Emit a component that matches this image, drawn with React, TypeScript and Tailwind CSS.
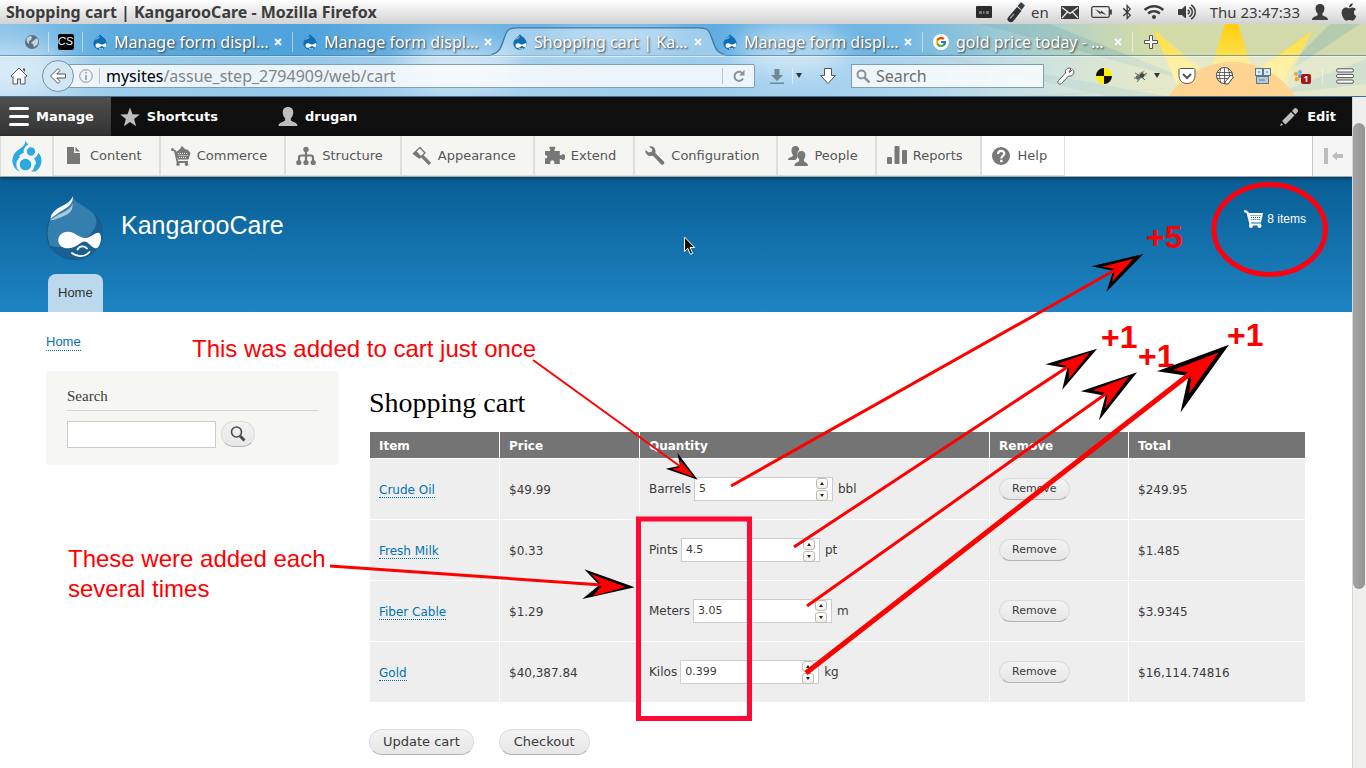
import React from 'react';
import { FaApple, FaBluetoothB, FaWifi, FaVolumeUp, FaGetPocket } from 'react-icons/fa';
import { FcGoogle } from 'react-icons/fc';

interface CartRow {
  id: string;
  item: string;
  price: string;
  label: string;
  qty: string;
  unit: string;
  total: string;
}

const rows: CartRow[] = [
  { id: 'oil', item: 'Crude Oil', price: '$49.99', label: 'Barrels', qty: '5', unit: 'bbl', total: '$249.95' },
  { id: 'milk', item: 'Fresh Milk', price: '$0.33', label: 'Pints', qty: '4.5', unit: 'pt', total: '$1.485' },
  { id: 'cable', item: 'Fiber Cable', price: '$1.29', label: 'Meters', qty: '3.05', unit: 'm', total: '$3.9345' },
  { id: 'gold', item: 'Gold', price: '$40,387.84', label: 'Kilos', qty: '0.399', unit: 'kg', total: '$16,114.74816' },
];

/* ---------- icons ---------- */

const Person = ({ className }: { className?: string }) => (
  <svg viewBox="0 0 18 18" className={className} fill="currentColor">
    <path d="M9 0c3.2 0 5 2 5 5 0 2.400-.9 4.500-2.300 5.700v1.800c.2 1.500 6.300 1.500 6.300 5.500H0c0-4 6.100-4 6.300-5.500v-1.800C4.900 9.500 4 7.400 4 5c0-3 1.800-5 5-5z" />
  </svg>
);

const Druplicon = ({ className }: { className?: string }) => (
  <svg viewBox="0 0 57 65" className={className}>
    <path d="M26.700 1C28 5 31 8 36 10.500 48 17 56.500 25 56.500 37.500 56.500 53 44 64.500 28.500 64.500S.5 53 .5 38C.5 30 3 24 7 18c5-5 18-6 19.700-17z" fill="#17608f" stroke="#1a5c8b" />
    <path d="M27 3c4 7 23 11 23.500 23C50 42 26 56 4.500 51-1 39 2 26 9 17 16 13 26 10 27 3z" fill="#357fae" />
    <path d="M4 25c3-1 5-4 10-6 7-3 11-6 13-11l-1 6c-2 5-8 7-13 9-4 1-6 3-9 2z" fill="#a9c9df" />
    <path d="M26.700 1C27.500 7 24 11 17 15c-5 3-8 5-12.300 9C4 19 10 14 16 11c6-3 9-5 10.700-10z" fill="#fff" />
    <path d="M12.300 45c0-5 4.700-8.300 9.700-8.300 7 0 11 6.300 17 6.300 5 0 10-6 14-5.300 3 2 2.500 9 0 13-1 2-2 2.600-3 2.600-4 0-7.500-6.800-11.500-6.800S30 53.300 22 53.300c-6 0-9.700-3.300-9.700-8.300z" fill="#fff" />
    <path d="M31.500 54.500c2-4 7-4 9.500-1M26 58c5 4.500 13 4 17.500-1" fill="none" stroke="#fff" strokeWidth="1.800" strokeLinecap="round" />
  </svg>
);

const Favicon = () => (
  <svg viewBox="0 0 14 16" className="h-4 w-3.5 shrink-0">
    <path d="M7 0c1 2.500 6.600 4 6.600 9.200C13.600 13 10.600 15.800 7 15.800S.4 13 .4 9.200C.4 5 5.500 3.500 7 0z" fill="#0f6fb4" />
    <path d="M2.500 11.400c0-1.400 1.200-2.200 2.400-2.200 1.800 0 2.600 1.400 4.100 1.400s2.700-1.800 4-1.400c.6 1.500.1 3.600-1 4-1.200.3-1.900-1.300-3-1.300-1.300 0-2 1.900-4 1.900-1.500 0-2.500-1-2.500-2.400z" fill="#fff" />
    <path d="M6 14.500c1.300.7 3 .7 4-.1" stroke="#fff" fill="none" strokeWidth=".8" />
    <path d="M2 6c1-2 4-2.500 4.800-4C7 4.500 4 5 2 6z" fill="#8fc7ea" />
  </svg>
);

const DrupalEight = () => (
  <svg viewBox="0 0 30 32" className="h-8 w-[30px]">
    <path d="M13 0c1 3 3.500 4.500 7 7.500 5.500 4 9.500 7 9.500 13 0 5-2.500 8.700-6 11H7C3 29 .5 25.500.5 20.500.5 14 4.500 11 9 8c2.500-2 5-4 4-8z" fill="#2ba9e0" />
    <circle cx="13.500" cy="24.500" r="7.500" fill="#2ba9e0" stroke="#f5f5f2" strokeWidth="3.500" />
    <circle cx="19" cy="11.500" r="5.800" fill="#2ba9e0" stroke="#f5f5f2" strokeWidth="3.300" />
    <path d="M8 17c2-2 4-3 5.500-3M20 18.500c2 1.500 2.500 3 2.500 6" stroke="#f5f5f2" strokeWidth="3" fill="none" />
    <circle cx="13.500" cy="25" r="5.200" fill="#2ba9e0" />
  </svg>
);

const Cart = ({ className, dots }: { className?: string; dots: string }) => (
  <svg viewBox="0 0 19 18" className={className}>
    <path d="M1 1.200l2.500 1.300L6 12.500l.5 2H17" fill="none" stroke="currentColor" strokeWidth="2" />
    <path d="M4 3h15l-2 9.500H6z" fill="currentColor" />
    <path d="M6.500 5.500h10.500M7 7.500h10M7.300 9.500h9" stroke={dots} strokeWidth="1" strokeDasharray="1 1" />
    <circle cx="1.300" cy="1.300" r="1.300" fill="currentColor" />
    <circle cx="7" cy="16" r="2" fill="currentColor" />
    <circle cx="15.500" cy="16" r="2" fill="currentColor" />
  </svg>
);

const trayIcons: Record<string, React.ReactNode> = {
  Content: (
    <path d="M3 1h7v6h6v11H3zM11.500 1L16 5.500h-4.500z" />
  ),
  Commerce: (
    <>
      <path d="M4.500 6L8 4l3-4 3 3 3 1 2.500 3-2 6.500H7z" />
      <path d="M1 3.500l3 1.500 2.500 11H17" fill="none" stroke="currentColor" strokeWidth="1.800" />
      <path d="M7 7.500h10M7.500 9.500h9M8 11.500h8" stroke="#f5f5f2" strokeWidth="1" strokeDasharray="1 1" />
      <circle cx="1.500" cy="3.500" r="1.500" />
      <circle cx="7" cy="18.300" r="1.700" />
      <circle cx="15.500" cy="18.300" r="1.700" />
    </>
  ),
  Structure: (
    <>
      <path d="M10 4v11M3 15v-3.500c0-1.500 1-2 2-2h10c1.200 0 2 .6 2 2V15" fill="none" stroke="currentColor" strokeWidth="2.200" />
      <circle cx="10" cy="3.500" r="2.700" />
      <circle cx="2.800" cy="16.500" r="2.600" />
      <circle cx="10" cy="16.500" r="2.600" />
      <circle cx="17.200" cy="16.500" r="2.600" />
    </>
  ),
  Appearance: (
    <>
      <path d="M1.500 7.500L8 1.500l5 5.500-5.500 5z" fill="none" stroke="currentColor" strokeWidth="1.300" />
      <path d="M.8 8l3.500-3 5.200 5.500-2.500 2z" />
      <path d="M10 10l8 8" stroke="currentColor" strokeWidth="3.200" />
    </>
  ),
  Extend: (
    <path d="M0 5h5.200V3.500C4 3 4 1 5 .8h4.500c1.200.2 1.200 2.200 0 2.700V5h5.300v4.300h1.400c.6-1.600 3.300-1.500 3.800.2v3.200c-.5 1.600-3.200 1.800-3.800.2h-1.400V18H9.300v-1.500c0-3-4-3-4 0V18H0v-5.500c3 0 3-3.500 0-3.500z" />
  ),
  Configuration: (
    <path d="M4 .8C6-.3 8.500.5 9.700 2.500c1 1.600 1 3 .6 4.600l8.500 8.300c1.600 1.800-.9 4.400-2.800 2.800L8 9.800C5 10.700 2 9.500.8 7 .4 6 .2 5 .3 4l3.500 2.600L7 5.500 7.200 3z" />
  ),
  People: (
    <>
      <path d="M7.500 0c2.600 0 3.800 1.700 3.800 4-1.800 1.300-2.300 4-1.500 6.500C9 12.500 8 13.800 7 14H0c0-3 4.600-3 4.800-4V8.500C3.900 7.600 3.500 6 3.500 4.200 3.500 1.700 4.900 0 7.500 0z" />
      <path d="M13.500 5c2.700 0 3.900 1.800 3.900 4.100 0 1.700-.6 3.400-1.500 4.200v1.600c.2 1.200 4.100 1.100 4.100 5.100H6.500c0-4 4.400-3.900 4.600-5.100v-1.600c-1-.8-1.500-2.500-1.500-4.200C9.600 6.800 10.800 5 13.500 5z" />
    </>
  ),
  Reports: (
    <>
      <rect x="0" y="11" width="5" height="7" rx="1" />
      <rect x="7.500" y="0" width="5" height="18" rx="1" />
      <rect x="15" y="4" width="5" height="14" rx="1" />
    </>
  ),
  Help: (
    <>
      <circle cx="9" cy="10" r="9" />
      <path d="M6 8c0-4 6.300-4 6.300-.5 0 2.200-3 2.300-3 5" fill="none" stroke="#fff" strokeWidth="2.200" />
      <rect x="8" y="13.800" width="2.600" height="2.400" fill="#fff" />
    </>
  ),
};

const Caret = () => (
  <svg viewBox="0 0 6 5" className="h-[5px] w-1.5">
    <path d="M0 0h6L3 5z" fill="#333" />
  </svg>
);

/* ---------- desktop panel ---------- */

const SystemBar = () => (
  <div className="flex h-6 shrink-0 items-center justify-between bg-linear-to-b from-white to-[#d2d2d2] pr-2 pl-1.5 font-['Noto_Sans',sans-serif] text-[#3c3c3c]">
    <span className="text-base font-bold">Shopping cart | KangarooCare - Mozilla Firefox</span>
    <div className="flex items-center text-[15px]">
      <svg viewBox="0 0 16 12" className="mr-3.5 h-3 w-4">
        <rect width="16" height="12" rx="1" fill="#2b2b2b" />
        <path d="M3 5h3v3H3zM7 5h1.500v3H7zM10 5h3v3h-3z" fill="#777" />
      </svg>
      <svg viewBox="0 0 19 21" className="mr-1.5 h-[21px] w-[19px]">
        <path d="M2 15.500L11 5l4.500 3.800L7 19.500c-3 2-7-1-5-4z" fill="#2e3136" />
        <path d="M11.500 4L15 0l4 3.500L15.500 8z" fill="#3c4147" />
        <path d="M4 16.500l4-4.500" stroke="#999" strokeWidth="1.500" />
      </svg>
      <span className="mr-3">en</span>
      <svg viewBox="0 0 18 13" className="mr-3 h-[13px] w-[18px]">
        <rect width="18" height="13" fill="currentColor" />
        <path d="M1 1.500l8 6 8-6M1 12l5.500-6M17 12l-5.500-6" fill="none" stroke="#f0f0f0" strokeWidth="1.200" />
      </svg>
      <svg viewBox="0 0 21 12" className="mr-2.5 h-3 w-[21px]">
        <rect x=".7" y=".7" width="17.600" height="10.600" rx="1.500" fill="none" stroke="currentColor" strokeWidth="1.300" />
        <rect x="19" y="3.500" width="1.800" height="5" fill="currentColor" />
        <path d="M4 3l6 3V4.500L15.500 9 9.500 7v1.500z" fill="currentColor" />
      </svg>
      <FaBluetoothB className="mr-3 h-4 w-2.5" />
      <FaWifi className="mr-3 h-4 w-5" />
      <FaVolumeUp className="mr-3 h-4 w-[22px]" />
      <span className="mr-3">Thu 23:47:33</span>
      <Person className="mr-3 h-4 w-4" />
      <FaApple className="h-5 w-[18px]" />
    </div>
  </div>
);

/* ---------- browser chrome ---------- */

const ThemeArt = () => (
  <svg viewBox="0 0 1366 73" preserveAspectRatio="xMaxYMin slice" className="absolute inset-0 h-full w-full">
    <defs>
      <linearGradient id="sky" x1="0" x2="1">
        <stop offset="0" stopColor="#8fc5e9" />
        <stop offset=".08" stopColor="#5facdf" />
        <stop offset=".22" stopColor="#4ea2dc" />
        <stop offset=".32" stopColor="#72b5e3" />
        <stop offset=".5" stopColor="#5dabe1" />
        <stop offset=".66" stopColor="#74b8e4" />
        <stop offset=".75" stopColor="#a6cdd0" />
        <stop offset=".84" stopColor="#d3dba8" />
        <stop offset="1" stopColor="#d2d9ac" />
      </linearGradient>
      <linearGradient id="ray" x1="0" y1="0" x2="0" y2="1">
        <stop offset="0" stopColor="#ffce0a" />
        <stop offset="1" stopColor="#fff08c" />
      </linearGradient>
      <filter id="soft" x="-50%" y="-50%" width="200%" height="200%">
        <feGaussianBlur stdDeviation="12" />
      </filter>
    </defs>
    <rect width="1366" height="73" fill="url(#sky)" />
    <g fill="#fff" opacity=".45" filter="url(#soft)">
      <ellipse cx="20" cy="45" rx="50" ry="25" />
      <ellipse cx="460" cy="40" rx="55" ry="24" />
      <ellipse cx="620" cy="12" rx="70" ry="10" />
      <ellipse cx="790" cy="25" rx="55" ry="26" />
    </g>
    <path d="M980 0h70l150 60zM1000 73l190-10-150 10zM1330 0h30l-90 60zM1366 35v25l-90 10zM880 20l290 53h-60z" fill="#7fb3b5" opacity=".35" />
    <path d="M1153 5l43 40-18 18zM1225 0h13l14 45h-41zM1312 7l-50 35 20 16z" fill="url(#ray)" />
    <path d="M1153 5l25 58 8 10 20-25zM1312 7l-30 62-20-25z" fill="#ffe76a" opacity=".6" />
    <circle cx="1232" cy="114" r="76" fill="#ffb84a" />
  </svg>
);

const tabText = 'text-base text-white [text-shadow:1px_1px_2px_#333]';

const Tab = ({ title, icon, active, divider }: { title: string; icon: React.ReactNode; active?: boolean; divider?: boolean }) => (
  <div className="relative flex h-8 w-[210px] min-w-0 items-center pt-1 pr-[9px] pl-2.5">
    {active && (
      <svg viewBox="0 0 234 34" className="absolute top-0.5 -left-3 h-[31px] w-[234px]" preserveAspectRatio="none">
        <path d="M0 30.500C8 30 10 24 13 14 16 4 18 2 26 2h182c8 0 10 2 13 12 3 10 5 16 13 16.500V34H0z" fill="#fff" fillOpacity=".38" />
        <path d="M0 31C8 30 10 24 13 14 16 4 18 2 26 2h182c8 0 10 2 13 12 3 10 5 16 13 17" fill="none" stroke="#41779f" strokeWidth="1.300" />
      </svg>
    )}
    <button className="relative flex min-w-0 flex-1 items-center gap-[7px] text-left">
      {icon}
      <span className={`whitespace-nowrap ${tabText}`}>{title}</span>
    </button>
    <button aria-label="Close tab" className="relative flex size-3 items-center justify-center">
      <svg viewBox="0 0 8 8" className="size-2">
        <path d="M1 1l6 6M7 1L1 7" stroke="#f4f8fb" strokeWidth="2" />
      </svg>
    </button>
    {divider && <span className="absolute top-2 right-0 h-5 w-px bg-white/50" />}
  </div>
);

const TabStrip = () => (
  <div className="relative flex h-8 items-stretch border-b border-[#4c7fa3]/70">
    <button aria-label="Pinned tab" className="flex w-12 items-center justify-end pt-1 pr-2">
      <svg viewBox="0 0 16 16" className="size-4">
        <circle cx="8" cy="8" r="7" fill="#5b7283" />
        <path d="M3 4c2-2 4-2 5-1l-1 3-2 1v3C3 9 2 7 3 4zM9 7l4-3c1.500 2 1.500 5 0 7l-3 2-1-3-2-1z" fill="#c3d3df" />
      </svg>
    </button>
    <span className="mt-2 h-5 w-px bg-white/50" />
    <button aria-label="Pinned tab" className="flex w-[33px] items-center justify-center pt-1">
      <span className="flex size-4 items-center justify-center rounded-xs bg-black font-['Liberation_Sans',sans-serif] text-[11px] text-white italic">CS</span>
    </button>
    <span className="mt-2 h-5 w-px bg-white/50" />
    <Tab title="Manage form displ…" icon={<Favicon />} divider />
    <Tab title="Manage form displ…" icon={<Favicon />} />
    <Tab title="Shopping cart | Ka…" icon={<Favicon />} active />
    <Tab title="Manage form displ…" icon={<Favicon />} divider />
    <Tab
      title="gold price today - …"
      icon={
        <span className="flex size-4 shrink-0 items-center justify-center rounded-full bg-white">
          <FcGoogle className="size-3" />
        </span>
      }
      divider
    />
    <button aria-label="New tab" className="flex w-9 items-center justify-center pt-1">
      <svg viewBox="0 0 14 14" className="size-3.5">
        <path d="M5.500.5h3v5h5v3h-5v5h-3v-5h-5v-3h5z" fill="#fff" stroke="#555" />
      </svg>
    </button>
  </div>
);

const NavBar = () => (
  <div className="relative flex h-10 items-center border-t border-white/40 bg-white/40 pb-0.5">
    <button aria-label="Home page" className="flex w-[38px] justify-center">
      <svg viewBox="0 0 18 18" className="size-[18px]">
        <path d="M9 1l8 8-1.300 1.300L15 9.600V17h-4.500v-5h-3v5H3V9.600l-.7.700L1 9z" fill="#fff" stroke="#555" strokeLinejoin="round" />
        <path d="M13 1.500h2V5l-2-2z" fill="#555" />
      </svg>
    </button>
    <button aria-label="Back" className="z-10 ml-1 flex size-8 items-center justify-center rounded-full border border-[#6d94b0] bg-[#d3e6f4]">
      <svg viewBox="0 0 18 18" className="size-[18px]">
        <path d="M9 1.500l2 2L7.800 7H16.500v4H7.800L11 14.500l-2 2L1.500 9z" fill="#fff" stroke="#555" strokeLinejoin="round" />
      </svg>
    </button>
    <div className="-ml-2 flex h-6 min-w-0 flex-1 items-center rounded-r-xs border border-[#7e9fb5] bg-white/80 pl-3">
      <svg viewBox="0 0 14 14" className="size-3.5 shrink-0" fill="none" stroke="#8d949a">
        <circle cx="7" cy="7" r="6.300" />
        <path d="M7 6v5M7 3v1.500" strokeWidth="1.500" />
      </svg>
      <span className="mx-1.5 h-4 w-px bg-[#b9c5ce]" />
      <label htmlFor="address" className="text-base text-black">mysites</label>
      <input id="address" defaultValue="/assue_step_2794909/web/cart" className="h-[22px] min-w-0 flex-1 bg-transparent text-base text-[#848484] outline-none" />
      <button aria-label="Reload" className="flex h-4 w-8 items-center justify-center border-l border-[#b9c5ce]">
        <svg viewBox="0 0 12 12" className="size-3" fill="none">
          <path d="M9.500 3.500A4.500 4.500 0 1 0 10 8.500" stroke="#8a9298" strokeWidth="2" />
          <path d="M11.500 0v5.500H6z" fill="#8a9298" />
        </svg>
      </button>
    </div>
    <button aria-label="Downloads" className="flex w-[37px] justify-center pl-1.5">
      <svg viewBox="0 0 14 16" className="h-4 w-3.5" fill="#6f8a93">
        <path d="M4.500 1h5v6H13l-6 6-6-6h3.500zM0 14.500h14V16H0z" />
      </svg>
    </button>
    <span className="h-4 w-px bg-white/50" />
    <button aria-label="Download history" className="flex w-3 justify-center">
      <Caret />
    </button>
    <button aria-label="Save" className="flex w-[46px] justify-center">
      <svg viewBox="0 0 18 18" className="size-[18px]">
        <path d="M5.500 1.500h7v7h4L9 16.500 1.500 8.500h4z" fill="#fff" stroke="#555" strokeLinejoin="round" />
      </svg>
    </button>
    <div className="flex h-6 w-[193px] items-center gap-1.5 border border-[#7e9fb5] bg-white/80 pl-1">
      <svg viewBox="0 0 14 14" className="size-3.5 shrink-0" fill="none" stroke="#8d9498">
        <circle cx="5.500" cy="5.500" r="4" strokeWidth="2" />
        <path d="M8.500 8.500l5 5" strokeWidth="2.500" />
      </svg>
      <input aria-label="Search the web" placeholder="Search" className="h-[22px] w-full min-w-0 bg-transparent text-base outline-none placeholder:text-[#6e6e6e]" />
    </div>
    <button aria-label="Tools" className="flex w-11 justify-center">
      <svg viewBox="0 0 18 18" className="size-[18px]">
        <path d="M15.500 2.500l-3 3-.5-.5L14 1.500c-3-1.500-6.500 1-5.500 4.500L1.500 13.500c-2 2.500 1 4.500 3 3L11.500 9c3.500 1 6.500-2.500 5-5.500z" fill="#fff" stroke="#555" />
      </svg>
    </button>
    <button aria-label="Target" className="flex w-8 justify-center">
      <svg viewBox="0 0 16 16" className="size-4">
        <circle cx="8" cy="8" r="8" fill="#ffee00" />
        <path d="M8 0v8H0a8 8 0 0 1 8-8zM8 16V8h8a8 8 0 0 1-8 8z" fill="#111" />
      </svg>
    </button>
    <button aria-label="Debugger" className="flex w-7 justify-center pl-3.5">
      <svg viewBox="0 0 16 14" className="h-3.5 w-4 shrink-0">
        <path d="M3 9l3-5 6-3-2 4 5 1-5 2 1 3-3-2z" fill="#a9aea9" />
        <path d="M2 4l5 3M4 13l4-5M12 11L9 8M1 9h6M9 3l0 3M14 4L9 7" stroke="#444" strokeWidth=".8" />
        <circle cx="9" cy="6.500" r="2.200" fill="#444" />
        <circle cx="5" cy="8.500" r="2.200" fill="#666" />
      </svg>
    </button>
    <button aria-label="Debugger menu" className="flex w-3 justify-end">
      <Caret />
    </button>
    <button aria-label="Pocket" className="flex w-[54px] justify-center">
      <svg viewBox="0 0 18 18" className="size-[18px]">
        <path d="M2.500 1.500h13c1 0 1.500.6 1.500 1.500v5.500c0 5-3.500 8-8 8s-8-3-8-8V3c0-.9.500-1.500 1.500-1.500z" fill="#fff" stroke="#555" />
        <path d="M5 7l4 4 4-4" fill="none" stroke="#555" strokeWidth="2" />
      </svg>
    </button>
    <button aria-label="Spell check" className="flex w-[22px] justify-center">
      <svg viewBox="0 0 18 18" className="size-[18px] shrink-0" fill="#fff" stroke="#444">
        <circle cx="8.500" cy="8.500" r="8" />
        <path d="M1 5.500h15M.5 8.500h16M1 11.500h15M8.500.5v16M5 1.500c-2 4-2 10 0 14M12 1.500c2 4 2 10 0 14" fill="none" strokeWidth=".8" />
        <path d="M9 15l6-7 2.500 2L12 17H9z" />
      </svg>
    </button>
    <button aria-label="Keys" className="flex w-[54px] justify-center">
      <svg viewBox="0 0 16 16" className="size-4" stroke="#5a7890">
        <rect x=".5" y=".5" width="7" height="7" fill="#dfe9f1" />
        <rect x="8.500" y=".5" width="7" height="7" fill="#dfe9f1" />
        <rect x="1.500" y="8.500" width="12" height="7" fill="#b7ccdb" />
        <path d="M4 12h6M3 4h2M11 4h2" />
      </svg>
    </button>
    <button aria-label="Alerts" className="flex w-[22px] justify-center">
      <span className="relative h-4 w-4">
        <svg viewBox="0 0 16 16" className="size-4">
          <circle cx="3" cy="6" r="2" fill="#f6a623" />
          <circle cx="7" cy="4" r="2" fill="#6db6e8" />
          <circle cx="4" cy="11" r="2.300" fill="#f6a623" />
          <circle cx="7" cy="8" r="2" fill="#4d9fe0" />
        </svg>
        <span className="absolute top-1.5 left-2 flex size-2.5 items-center justify-center rounded-xs bg-[#b01116] text-[9px] font-bold text-white">1</span>
      </span>
    </button>
    <span className="ml-2.5 h-4 w-px bg-white/40" />
    <button aria-label="Menu" className="flex w-[43px] justify-center">
      <svg viewBox="0 0 18 16" className="h-4 w-[18px]" fill="#fff" stroke="#555">
        <rect x=".5" y=".8" width="17" height="3.200" rx="1.500" />
        <rect x=".5" y="6.400" width="17" height="3.200" rx="1.500" />
        <rect x=".5" y="12" width="17" height="3.200" rx="1.500" />
      </svg>
    </button>
  </div>
);

/* ---------- admin toolbar ---------- */

const AdminBar = () => (
  <nav className="flex h-[39px] items-stretch bg-[#0f0f0f] text-[13px] font-bold text-white">
    <a href="#manage" className="flex items-center gap-[7px] bg-linear-to-b from-[#4f4f4f] to-[#333] pr-[17px] pl-[9px]">
      <svg viewBox="0 0 20 19" className="h-[19px] w-5" fill="#fff">
        <rect width="20" height="3" rx="1.500" />
        <rect y="8" width="20" height="3" rx="1.500" />
        <rect y="16" width="20" height="3" rx="1.500" />
      </svg>
      Manage
    </a>
    <a href="#shortcuts" className="flex items-center gap-[7px] pr-[17px] pl-[9px]">
      <svg viewBox="0 0 20 20" className="size-5" fill="#bebebe">
        <path d="M10 .5l2.500 6.800 7.300.2-5.700 4.600 2 7.100L10 15l-6.100 4.200 2-7.100L.2 7.500l7.300-.2z" />
      </svg>
      Shortcuts
    </a>
    <a href="#user" className="ml-[34px] flex items-center gap-[7px] pr-[17px] pl-[9px]">
      <Person className="h-[19px] w-5 text-[#bebebe]" />
      drugan
    </a>
    <a href="#edit" className="ml-auto flex items-center gap-[9px] pr-4 pl-[9px]">
      <svg viewBox="0 0 18 18" className="size-[18px]" fill="#bebebe">
        <path d="M0 18l1.200-3 2 1.800zM2 13L11 4l3.500 3.500-9 9zM12 3l2-2.300c.8-.9 2-.7 2.800 0l.8.9c.6.7.7 1.700 0 2.400L15.500 6.500z" />
      </svg>
      Edit
    </a>
  </nav>
);

const Tray = () => (
  <nav className="relative z-10 flex h-[41px] items-stretch border-b border-[#a6a6a6] bg-white text-[13px] text-[#565656] shadow-[0_1px_4px_rgba(0,0,0,0.5)]">
    <a href="#drupal" aria-label="Drupal" className="flex w-[52px] justify-center border-l border-[#ddd] bg-[#f5f5f2] pt-1">
      <DrupalEight />
    </a>
    {Object.keys(trayIcons).map((name) => (
      <a
        key={name}
        href={`#${name.toLowerCase()}`}
        className={`flex items-center gap-1.5 border-b border-l-2 border-[#ddd] pr-[17px] pl-2.5 ${
          name === 'Help' ? 'border-r bg-white' : 'bg-[#f5f5f2]'
        }`}
      >
        <svg viewBox="0 0 20 20" className="size-5 text-[#787878]" fill="currentColor">
          {trayIcons[name]}
        </svg>
        {name}
      </a>
    ))}
    <button aria-label="Vertical orientation" className="ml-auto flex w-10 items-center justify-center border-l border-[#c4c4c4] bg-[#f5f5f5]">
      <svg viewBox="0 0 20 16" className="h-4 w-5" fill="#bcbcbc">
        <path d="M1 0h4v16H1zM9 8l5-4.500V6h6v4h-6v2.500z" />
      </svg>
    </button>
  </nav>
);

/* ---------- site ---------- */

const pill = 'rounded-full border border-[#dcdcdc] border-b-[#b4b4b4] bg-linear-to-b from-[#f3f3f3] to-[#e7e7e7] text-[#3a3a3a]';

const SiteHeader = () => (
  <header className="flex h-[135px] flex-col bg-linear-to-b from-[#085e94] to-[#1d84c3] pr-[46px] pl-[46px] font-['Liberation_Sans',sans-serif]">
    <div className="flex flex-1 items-start justify-between pt-[18px]">
      <div className="flex gap-[18px]">
        <Druplicon className="h-[65px] w-[57px]" />
        <a href="#front" className="pt-3 text-[25px] leading-9 text-white">KangarooCare</a>
      </div>
      <a href="#cart" className="flex items-center gap-1 pt-[15px] text-xs text-white">
        <Cart className="h-[18px] w-[19px]" dots="#0d68a3" />
        8 items
      </a>
    </div>
    <a href="#home" className="ml-0.5 flex h-[38px] items-center self-start rounded-t-lg bg-[#bbd8ec] px-2.5 text-[13px] text-[#333]">Home</a>
  </header>
);

const Spinner = ({ row }: { row: CartRow }) => (
  <span className="flex h-6 w-[139px] items-center border border-[#ccc] bg-white">
    <input id={row.id} defaultValue={row.qty} inputMode="decimal" className="min-w-0 flex-1 bg-transparent pl-1 text-[11px] text-[#3b3b3b] outline-none" />
    <span className="mr-1 flex flex-col gap-px">
      {['M0 3h4L2 0z', 'M0 0h4L2 3z'].map((d, i) => (
        <button key={d} aria-label={i === 0 ? 'Increase' : 'Decrease'} className="flex h-[11px] w-3 items-center justify-center rounded-[3px] border border-[#c3b9ae] bg-linear-to-b from-white to-[#f1efec]">
          <svg viewBox="0 0 4 3" className="h-[3px] w-1">
            <path d={d} fill="#222" />
          </svg>
        </button>
      ))}
    </span>
  </span>
);

const dotted = 'border-b border-dotted border-[#0071b3] text-[#0071b3]';
const th = 'border-r border-white px-[9px] text-left font-bold last:border-r-0';
const td = 'border-t border-r border-white px-[9px] last:border-r-0';

const CartTable = () => (
  <table className="mt-[11px] w-full table-fixed border-separate border-spacing-0 border-l border-white text-xs text-[#3b3b3b]">
    <colgroup>
      <col className="w-[130px]" />
      <col className="w-[140px]" />
      <col />
      <col className="w-[139px]" />
      <col className="w-[176px]" />
    </colgroup>
    <thead>
      <tr className="h-[26px] bg-[#747474] text-white">
        <th className={`${th} pt-0.5`}>Item</th>
        <th className={`${th} pt-0.5`}>Price</th>
        <th className={`${th} pt-0.5`}>Quantity</th>
        <th className={`${th} pt-0.5`}>Remove</th>
        <th className={`${th} pt-0.5`}>Total</th>
      </tr>
    </thead>
    <tbody>
      {rows.map((row) => (
        <tr key={row.id} className="h-[61px] bg-[#eee]">
          <td className={`${td} pt-0.5`}>
            <a href={`#${row.id}`} className={dotted}>{row.item}</a>
          </td>
          <td className={`${td} pt-0.5`}>{row.price}</td>
          <td className={td}>
            <div className="flex items-center">
              <label htmlFor={row.id} className="mr-[3px]">{row.label}</label>
              <Spinner row={row} />
              <span className="ml-[5px]">{row.unit}</span>
            </div>
          </td>
          <td className={td}>
            <button className={`block h-[22px] px-3 text-[11px] ${pill}`}>Remove</button>
          </td>
          <td className={`${td} pt-0.5`}>{row.total}</td>
        </tr>
      ))}
    </tbody>
  </table>
);

const Page = () => (
  <div className="pt-5 pr-[47px] pl-[46px]">
    <div className="flex h-5 items-center font-['Liberation_Sans',sans-serif] text-[13px]">
      <a href="#home" className={`leading-4 ${dotted}`}>Home</a>
    </div>
    <div className="mt-[19px] flex items-start gap-[30px]">
      <aside className="w-[293px] shrink-0 border border-[#f9f9f9] bg-[#f6f6f2] px-5 pt-[15px] pb-4">
        <h2 className="border-b border-[#d6d6d6] pb-[5px] font-['Liberation_Serif',serif] text-[15px] leading-[18px] text-[#3b3b3b]">Search</h2>
        <form className="mt-2.5 flex gap-[5px]" onSubmit={(e) => e.preventDefault()}>
          <input aria-label="Search" className="h-[27px] w-[149px] border border-[#ccc] bg-white px-1 text-xs outline-none" />
          <button aria-label="Search" className={`flex h-[26px] w-[34px] items-center justify-center ${pill}`}>
            <svg viewBox="0 0 16 16" className="size-4" fill="none" stroke="#4a4a4a">
              <circle cx="6.500" cy="6" r="5" strokeWidth="1.600" />
              <path d="M10 10l4.500 4.500" strokeWidth="3" />
            </svg>
          </button>
        </form>
      </aside>
      <main className="min-w-0 flex-1 pt-3.5">
        <h1 className="font-['Liberation_Serif',serif] text-[28px] leading-9 text-black">Shopping cart</h1>
        <CartTable />
        <div className="mt-[27px] flex gap-[25px] text-[13px]">
          <button className={`h-[26px] px-[13px] ${pill}`}>Update cart</button>
          <button className={`h-[26px] px-3.5 ${pill}`}>Checkout</button>
        </div>
      </main>
    </div>
  </div>
);

/* ---------- mark-up drawn over the page ---------- */

const arrows = [
  { from: [533, 360], to: [681, 467], w: 2, outer: '697.7,479.7 677.3,452.7 680,465.7 665.7,468.7', inner: '694.3,477.3 679,459.3 681,466.7 672,469' },
  { from: [731, 486], to: [1115, 270], w: 3, outer: '1143.3,254 1091.3,266.3 1113.3,270.7 1106.3,292', inner: '1133.3,258.7 1102,266.7 1115.3,269 1112,282' },
  { from: [794, 547], to: [1069, 366], w: 3, outer: '1097.1,348.7 1045.4,364.3 1067.2,368.3 1062.2,389.7', inner: '1089.6,352.5 1057,364 1069.2,366.3 1068.9,379' },
  { from: [807, 606], to: [1107, 393], w: 3, outer: '1137.1,372.3 1080.7,391.3 1105.5,395.7 1098.8,420.5', inner: '1129,376.5 1092.8,390.3 1107.6,393.3 1105.2,408.3' },
  { from: [806, 673], to: [1191, 373], w: 5, outer: '1229,344.7 1157,371.3 1188.6,376 1180.5,412.5', inner: '1218.5,352.5 1173,370 1191.6,373 1189.2,393.5' },
  { from: [330, 566], to: [602, 585], w: 3, outer: '634.7,587.3 584.3,569.3 599.3,585 582.3,599', inner: '625.7,587 590.7,573.7 602.3,585.3 593,596' },
];

const note = 'absolute whitespace-nowrap text-[#ff0000]';

const Markup = () => (
  <div className="pointer-events-none absolute inset-0 z-20 overflow-hidden font-['Liberation_Sans',sans-serif]">
    <p className={`${note} top-[334px] left-[192px] text-2xl leading-[30px]`}>This was added to cart just once</p>
    <p className={`${note} top-[544px] left-[68px] text-2xl leading-[30px]`}>
      These were added each
      <br />
      several times
    </p>
    <span className={`${note} top-[219px] left-[1146px] text-[32px] leading-9 font-bold`}>+5</span>
    <span className={`${note} top-[319px] left-[1101px] text-[32px] leading-9 font-bold`}>+1</span>
    <span className={`${note} top-[338px] left-[1138px] text-[32px] leading-9 font-bold`}>+1</span>
    <span className={`${note} top-[317px] left-[1227px] text-[32px] leading-9 font-bold`}>+1</span>
    <svg width="1366" height="768" className="absolute top-0 left-0 max-w-none">
      {arrows.map((a) => (
        <g key={a.outer}>
          <polygon points={a.outer} fill="#000" />
          <line x1={a.from[0]} y1={a.from[1]} x2={a.to[0]} y2={a.to[1]} stroke="#ff0000" strokeWidth={a.w} />
          <polygon points={a.inner} fill="#ff0000" />
        </g>
      ))}
      <ellipse cx="1269.700" cy="229.500" rx="55.800" ry="45" fill="none" stroke="#ff0010" strokeWidth="5" />
      <rect x="638.500" y="519" width="111" height="199.500" fill="none" stroke="#ff0a37" strokeWidth="5" />
      <path d="M684.500 237v14.500l3.300-3.200 2.600 6 2.300-1-2.600-5.800h4.600z" fill="#111" stroke="#fff" />
    </svg>
  </div>
);

export default function App() {
  return (
    <div className="relative flex h-screen flex-col overflow-hidden bg-white font-['DejaVu_Sans',sans-serif]">
      <SystemBar />
      <div className="relative shrink-0 overflow-hidden border-b border-[#3d719a] font-['Noto_Sans',sans-serif]">
        <ThemeArt />
        <TabStrip />
        <NavBar />
      </div>
      <div className="flex min-h-0 flex-1">
        <div className="min-w-0 flex-1 overflow-hidden">
          <AdminBar />
          <Tray />
          <SiteHeader />
          <Page />
        </div>
        <div className="w-3.5 shrink-0 border-l border-[#d8d6d3] bg-[#f0efed] pt-[26px] pr-px">
          <div className="h-[466px] rounded-full bg-linear-to-r from-[#a4a4a4] to-[#949494]" />
        </div>
      </div>
      <Markup />
    </div>
  );
}
